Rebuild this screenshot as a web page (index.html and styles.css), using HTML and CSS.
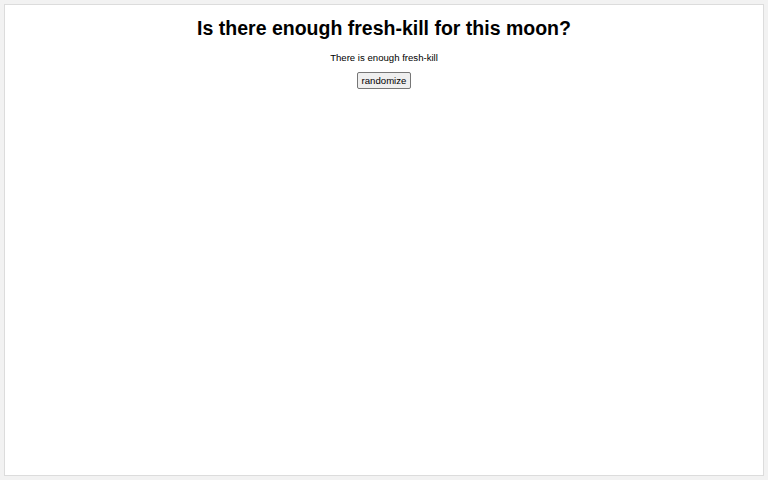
FILE: index.html
```html
<!DOCTYPE html>
<html>
<head>
    <title>Fresh-kill</title>
    <link rel="stylesheet" href="styles.css">
</head>
<body>
    <div id="container">
        <h1>Is there enough fresh-kill for this moon?</h1>
        <p id="result">There is enough fresh-kill</p>
        <button id="randomize" onclick="randomize()">randomize</button>
    </div>
    <script>
        function randomize() {
            const enough = Math.random() < 0.5;
            document.getElementById('result').textContent =
                enough ? 'There is enough fresh-kill' : 'There is not enough fresh-kill';
        }
    </script>
</body>
</html>
```

FILE: styles.css
```css
html, body {
    height: 100%;
}
body {
    font-family: "Liberation Sans", Arial, sans-serif;
    background-color: #f2f2f2;
    margin: 0;
    padding: 4px;
    box-sizing: border-box;
}
#container {
    height: 100%;
    box-sizing: border-box;
    background-color: #fff;
    border: 1px solid #dcdcdc;
    text-align: center;
    padding-top: 12px;
}
h1 {
    color: #000;
    font-size: 19.5px;
    margin: 0 0 12px;
}
#result {
    font-size: 9.6px;
    margin: 0 0 7px;
}
#randomize {
    font-family: "Liberation Sans", Arial, sans-serif;
    font-size: 9.6px;
    padding: 2px 4px;
    border: 1px solid #767676;
    border-radius: 2px;
    background-color: #efefef;
}
```
